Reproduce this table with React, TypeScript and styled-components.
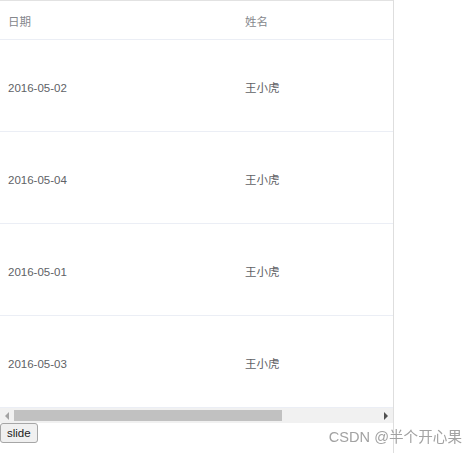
import React, { useLayoutEffect, useRef, useState } from "react";
import styled, { createGlobalStyle } from "styled-components";

const GlobalStyle = createGlobalStyle`
  html, body {
    margin: 0;
    padding: 0;
    background: #ffffff;
  }
  body {
    font-family: "Liberation Sans", "Noto Sans CJK SC", sans-serif;
  }
`;

const Page = styled.div`
  width: 394px;
  min-height: 100vh;
  box-sizing: border-box;
  border-right: 1px solid #dedede;
`;

const TableFrame = styled.div`
  width: 393px;
  border-top: 1px solid #e2e2e2;
`;

const ScrollArea = styled.div`
  width: 100%;
  overflow-x: auto;
  overflow-y: hidden;
  scrollbar-width: none;
  &::-webkit-scrollbar {
    display: none;
  }
`;

const Table = styled.div`
  width: 535px;
  display: flex;
  flex-direction: column;
`;

const Row = styled.div<{ $head?: boolean }>`
  display: grid;
  grid-template-columns: 237px 1fr;
  align-items: center;
  box-sizing: border-box;
  height: ${(p) => (p.$head ? "39px" : "92px")};
  padding-top: 4px;
  border-bottom: 1px solid #ebeef5;
  color: ${(p) => (p.$head ? "#85878c" : "#606266")};
  font-size: 11.5px;
  line-height: 16px;
`;

const Cell = styled.div`
  padding-left: 8px;
  white-space: nowrap;
`;

const ScrollBar = styled.div`
  display: flex;
  height: 15px;
  background: #f1f1f1;
`;

const Arrow = styled.button<{ $dir: "left" | "right"; $dim?: boolean }>`
  flex: 0 0 14px;
  height: 15px;
  margin: 0;
  padding: 0;
  border: 0;
  background: transparent;
  display: flex;
  align-items: center;
  justify-content: center;
  &::before {
    content: "";
    width: 0;
    height: 0;
    border-top: 4px solid transparent;
    border-bottom: 4px solid transparent;
    ${(p) =>
      p.$dir === "left"
        ? `border-right: 4px solid ${p.$dim ? "#a3a3a3" : "#505050"};`
        : `border-left: 4px solid ${p.$dim ? "#a3a3a3" : "#505050"};`}
  }
`;

const Track = styled.div`
  flex: 1 1 auto;
  position: relative;
`;

const Thumb = styled.div`
  position: absolute;
  top: 2px;
  bottom: 2px;
  left: 0;
  background: #c1c1c1;
`;

const SlideButton = styled.button`
  display: block;
  margin: 0;
  padding: 2px 6px 1px;
  font-family: "Liberation Sans", sans-serif;
  font-size: 11.5px;
  line-height: 15px;
  color: #222;
  background: #f0f0f0;
  border: 1px solid #a6a6a6;
  border-radius: 3px;
`;

const Watermark = styled.div`
  position: fixed;
  right: 12px;
  bottom: 7px;
  font-family: "Liberation Sans", "Noto Sans CJK SC", sans-serif;
  font-size: 14.6px;
  line-height: 17px;
  color: #a2a2a2;
  white-space: nowrap;
  pointer-events: none;
`;

const rows = [
  { date: "2016-05-02", name: "王小虎" },
  { date: "2016-05-04", name: "王小虎" },
  { date: "2016-05-01", name: "王小虎" },
  { date: "2016-05-03", name: "王小虎" },
];

export default function App() {
  const areaRef = useRef<HTMLDivElement>(null);
  const [metrics, setMetrics] = useState({ client: 393, content: 535, left: 0 });

  const update = () => {
    const el = areaRef.current;
    if (!el) return;
    setMetrics({ client: el.clientWidth, content: el.scrollWidth, left: el.scrollLeft });
  };

  useLayoutEffect(() => {
    update();
  }, []);

  const trackLen = metrics.client - 28;
  const thumbW = Math.round((trackLen * metrics.client) / metrics.content);
  const maxScroll = Math.max(1, metrics.content - metrics.client);
  const thumbX = Math.round(((trackLen - thumbW) * metrics.left) / maxScroll);
  const atStart = metrics.left <= 0;
  const atEnd = metrics.left >= maxScroll;

  const scrollBy = (d: number) => {
    areaRef.current?.scrollBy({ left: d });
  };

  return (
    <>
      <GlobalStyle />
      <Page>
        <TableFrame>
          <ScrollArea ref={areaRef} onScroll={update}>
            <Table>
              <Row $head>
                <Cell>日期</Cell>
                <Cell>姓名</Cell>
              </Row>
              {rows.map((r, i) => (
                <Row key={i}>
                  <Cell>{r.date}</Cell>
                  <Cell>{r.name}</Cell>
                </Row>
              ))}
            </Table>
          </ScrollArea>
          <ScrollBar>
            <Arrow $dir="left" $dim={atStart} onClick={() => scrollBy(-40)} />
            <Track>
              <Thumb style={{ width: thumbW, transform: `translateX(${thumbX}px)` }} />
            </Track>
            <Arrow $dir="right" $dim={atEnd} onClick={() => scrollBy(40)} />
          </ScrollBar>
        </TableFrame>
        <SlideButton onClick={() => scrollBy(100)}>slide</SlideButton>
      </Page>
      <Watermark>CSDN @半个开心果</Watermark>
    </>
  );
}
